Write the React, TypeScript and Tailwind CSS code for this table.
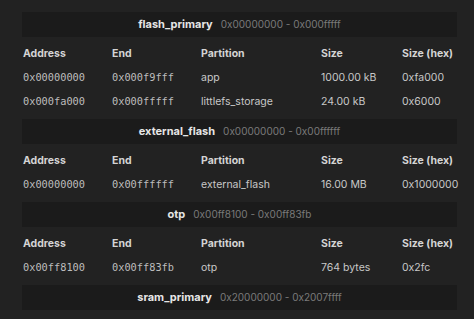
import React from 'react';

type Row = { address: string; end: string; partition: string; size: string; hex: string };
type Region = { name: string; range: string; rows: Row[] };

const regions: Region[] = [
    {
        name: 'flash_primary',
        range: '0x00000000 - 0x000fffff',
        rows: [
            { address: '0x00000000', end: '0x000f9fff', partition: 'app', size: '1000.00 kB', hex: '0xfa000' },
            { address: '0x000fa000', end: '0x000fffff', partition: 'littlefs_storage', size: '24.00 kB', hex: '0x6000' },
        ],
    },
    {
        name: 'external_flash',
        range: '0x00000000 - 0x00ffffff',
        rows: [
            { address: '0x00000000', end: '0x00ffffff', partition: 'external_flash', size: '16.00 MB', hex: '0x1000000' },
        ],
    },
    {
        name: 'otp',
        range: '0x00ff8100 - 0x00ff83fb',
        rows: [
            { address: '0x00ff8100', end: '0x00ff83fb', partition: 'otp', size: '764 bytes', hex: '0x2fc' },
        ],
    },
    {
        name: 'sram_primary',
        range: '0x20000000 - 0x2007ffff',
        rows: [],
    },
];

const cols = 'grid grid-cols-[89px_89px_120px_81px_1fr] items-center h-6';

function RegionBlock({ region }: { region: Region }) {
    return (
        <div>
            <div className="h-[25px] bg-[#1b1b1b] flex items-center justify-center gap-[8px]">
                <span className="text-[11px] font-bold text-[#e6e6e6]">{region.name}</span>
                <span className="text-[10px] text-[#7a7a7a]">{region.range}</span>
            </div>
            {region.rows.length > 0 && (
                <div className="pt-[5px] pb-[5px] pl-[1px]">
                    <div className={`${cols} text-[10.5px] font-bold text-[#d4d4d4]`}>
                        <span>Address</span>
                        <span>End</span>
                        <span>Partition</span>
                        <span>Size</span>
                        <span className="whitespace-nowrap">Size (hex)</span>
                    </div>
                    {region.rows.map((r) => (
                        <div key={r.address} className={`${cols} text-[10.5px] text-[#c8c8c8]`}>
                            <span className="font-['DejaVu_Sans_Mono',monospace] text-[10.3px] font-medium text-[#bdbdbd]">{r.address}</span>
                            <span className="font-['DejaVu_Sans_Mono',monospace] text-[10.3px] font-medium text-[#bdbdbd]">{r.end}</span>
                            <span>{r.partition}</span>
                            <span>{r.size}</span>
                            <span>{r.hex}</span>
                        </div>
                    ))}
                </div>
            )}
        </div>
    );
}

export default function App() {
    return (
        <div className="w-[474px] h-[319px] overflow-hidden bg-[#222222] font-['Inter',sans-serif] antialiased">
            <div className="ml-[22px] mr-[17px] pt-[12px]">
                {regions.map((r) => (
                    <RegionBlock key={r.name} region={r} />
                ))}
            </div>
        </div>
    );
}
